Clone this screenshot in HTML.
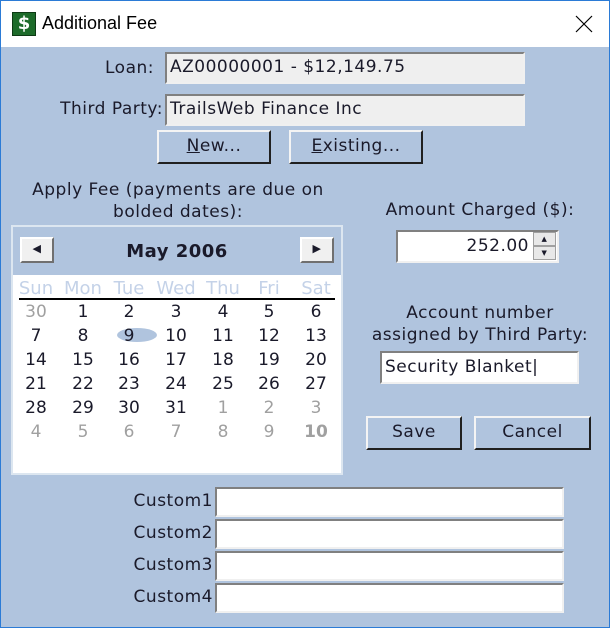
<!DOCTYPE html>
<html><head><style>
*{margin:0;padding:0;box-sizing:border-box}
body{width:610px;height:628px;overflow:hidden;background:#B0C4DE;font-family:"DejaVu Sans","Liberation Sans",sans-serif;font-size:17px;letter-spacing:0.5px;color:#1a1a2a;position:relative}
.a{position:absolute;white-space:nowrap}
.r{text-align:right}
.title{position:absolute;left:0;top:0;width:610px;height:47px;background:#fff;border:1px solid #2b7bd6;border-bottom:none}
.frame{position:absolute;left:0;top:47px;width:610px;height:581px;border-left:1px solid #2b7bd6;border-right:1px solid #2b7bd6;border-bottom:1px solid #2b7bd6}
.fld{position:absolute;background:#fff;border:2px solid;border-color:#808080 #f0f0f0 #f0f0f0 #808080;padding-left:3px;line-height:26px}
.ro{background:#efefef}
.btn{position:absolute;background:#B0C4DE;border:2px solid;border-color:#f4f4f4 #202020 #202020 #f4f4f4;text-align:center;line-height:28px}
.cal{position:absolute;left:11px;top:225px;width:332px;height:250px;background:#fff;border:2px solid #dce6f0}
.d{position:absolute;width:40px;text-align:center;font-size:17px;letter-spacing:0}
.g{color:#a0a0a0}
.h{color:#c4d2e8}
</style></head><body>
<div class="title"></div>
<div class="a" style="left:12px;top:12px;width:24px;height:24px;background:#1d6b2a;border:1px solid #0d3a14;color:#fff;font-weight:bold;font-size:18px;text-align:center;line-height:22px;letter-spacing:0">$</div>
<div class="a" style="left:42px;top:13px;font-family:'Liberation Sans',sans-serif;font-size:18px;color:#000;letter-spacing:0">Additional Fee</div>
<svg class="a" style="left:575px;top:15px" width="18" height="18"><path d="M1 1L17 17M17 1L1 17" stroke="#000" stroke-width="1.2"/></svg>
<div class="frame"></div>

<div class="a r" style="left:0;width:154px;top:58px">Loan:</div>
<div class="fld ro" style="left:165px;top:52px;width:360px;height:32px">AZ00000001 - $12,149.75</div>
<div class="a r" style="left:0;width:163px;top:99px">Third Party:</div>
<div class="fld ro" style="left:165px;top:94px;width:360px;height:32px">TrailsWeb Finance Inc</div>
<div class="btn" style="left:157px;top:130px;width:114px;height:34px"><u>N</u>ew...</div>
<div class="btn" style="left:289px;top:130px;width:134px;height:34px"><u>E</u>xisting...</div>

<div class="a" style="left:0;width:356px;text-align:center;top:179px;line-height:22px">Apply Fee (payments are due on<br>bolded dates):</div>

<div class="cal">
<div class="a" style="left:0;top:0;width:328px;height:48px;background:#B0C4DE"></div>
<div class="btn" style="left:7px;top:10px;width:34px;height:26px;background:#f0f0f0;line-height:20px;font-size:11px;border-color:#fff #707070 #707070 #fff">◀</div>
<div class="btn" style="left:287px;top:10px;width:34px;height:26px;background:#f0f0f0;line-height:20px;font-size:11px;border-color:#fff #707070 #707070 #fff">▶</div>
<div class="a" style="left:0;width:328px;text-align:center;top:14px;font-weight:bold;font-size:18px">May 2006</div>
<div class="a" style="left:6px;top:71px;width:316px;height:2px;background:#000"></div>
<div class="a" style="left:104px;top:101px;width:40px;height:14px;border-radius:50%;background:#B0C4DE"></div>
<div id="days"></div>
</div>

<div class="a" style="left:350px;width:260px;text-align:center;top:200px">Amount Charged ($):</div>
<div class="fld" style="left:396px;top:230px;width:163px;height:33px;text-align:right;padding-right:28px;line-height:28px">252.00</div>
<div class="a" style="left:533px;top:232px;width:23px;height:14px;background:#e8e8e8;border:1px solid #a0a0a0;font-size:7px;text-align:center;line-height:12px">▲</div>
<div class="a" style="left:533px;top:246px;width:23px;height:14px;background:#e8e8e8;border:1px solid #a0a0a0;font-size:7px;text-align:center;line-height:12px">▼</div>

<div class="a" style="left:350px;width:260px;text-align:center;top:302px;line-height:22px">Account number<br>assigned by Third Party:</div>
<div class="fld" style="left:380px;top:351px;width:199px;height:33px;line-height:28px">Security Blanket|</div>

<div class="btn" style="left:366px;top:416px;width:96px;height:34px">Save</div>
<div class="btn" style="left:474px;top:416px;width:117px;height:34px">Cancel</div>

<div class="a r" style="left:0;width:213px;top:491px">Custom1</div>
<div class="fld" style="left:215px;top:487px;width:349px;height:30px"></div>
<div class="a r" style="left:0;width:213px;top:523px">Custom2</div>
<div class="fld" style="left:215px;top:519px;width:349px;height:30px"></div>
<div class="a r" style="left:0;width:213px;top:555px">Custom3</div>
<div class="fld" style="left:215px;top:551px;width:349px;height:30px"></div>
<div class="a r" style="left:0;width:213px;top:587px">Custom4</div>
<div class="fld" style="left:215px;top:583px;width:349px;height:30px"></div>

<script>
var cx=[23,70,116,163,210,256,303];
var h='';
['Sun','Mon','Tue','Wed','Thu','Fri','Sat'].forEach(function(n,i){h+='<div class="d h" style="left:'+(cx[i]-25)+'px;width:50px;top:51px;font-size:18px">'+n+'</div>';});
var rows=[[30,1,2,3,4,5,6],[7,8,9,10,11,12,13],[14,15,16,17,18,19,20],[21,22,23,24,25,26,27],[28,29,30,31,1,2,3],[4,5,6,7,8,9,10]];
rows.forEach(function(r,ri){r.forEach(function(v,i){var g=(ri==0&&i==0)||(ri==4&&i>3)||ri==5;var st='';if(ri==5&&i==6)st='font-weight:bold;';h+='<div class="d'+(g?' g':'')+'" style="'+st+'left:'+(cx[i]-20)+'px;top:'+(75+ri*24)+'px">'+v+'</div>';});});
document.getElementById('days').innerHTML=h;
</script>
</body></html>
